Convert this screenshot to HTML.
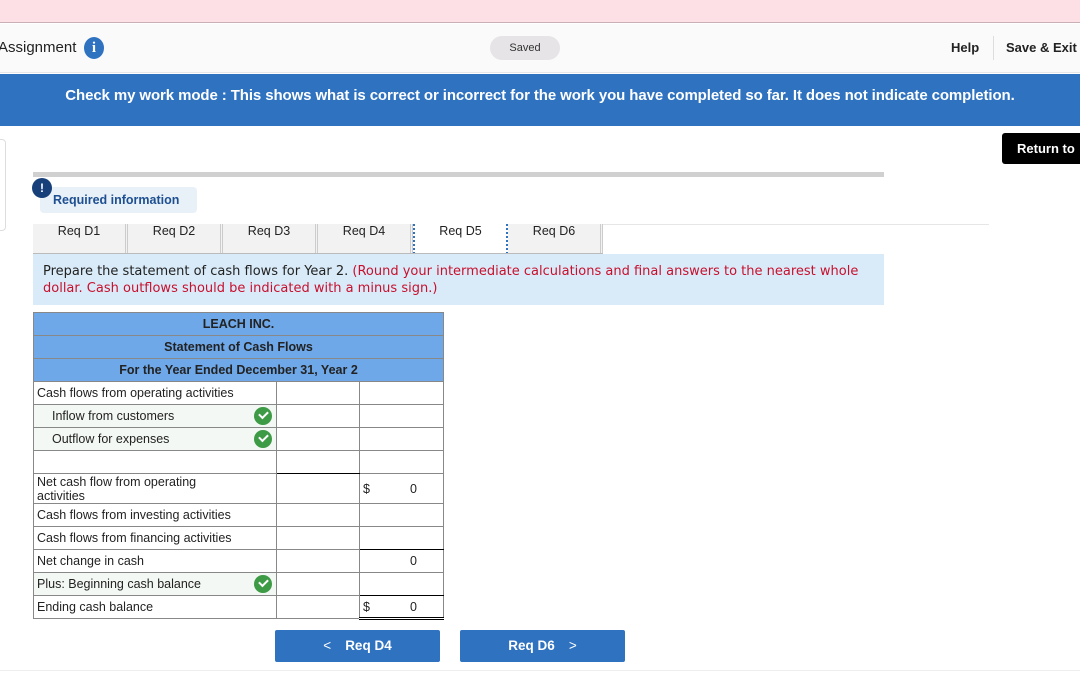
<!DOCTYPE html>
<html><head><meta charset="utf-8"><style>
*{box-sizing:border-box;margin:0;padding:0}
body{width:1080px;height:676px;overflow:hidden;background:#fff;font-family:"Liberation Sans",Arial,sans-serif;position:relative;color:#222}
.abs{position:absolute}
.pink{left:0;top:0;width:1080px;height:23px;background:#fde0e6;border-bottom:1px solid #c8b0b5}
.hdr{left:0;top:24px;width:1080px;height:49px;background:#fafafa;border-bottom:1px solid #e6e6e6}
.banner{left:0;top:74px;width:1080px;height:52px;background:#2f72c0;color:#fff;font-weight:bold;font-size:15px;text-align:center;line-height:44px;letter-spacing:-0.1px}
.tab{top:224px;height:30px;width:95px;background:#f2f2f2;border-right:3px double #ccc;font-size:12.5px;text-align:center;line-height:14px;padding-top:0}
table{border-collapse:collapse;position:absolute;left:33px;top:312px;width:411px;font-size:12.5px}
td{border:1px solid #888;height:23px;padding:0 3px;vertical-align:middle;position:relative}
.h td{background:#6fa8e8;font-weight:bold;text-align:center;border-color:#888;height:23px}
.g td.l{background:#f3f8f4}
.chk{display:block;width:18px;height:18px;border-radius:50%;background:#3d9a45;position:absolute;right:4px;top:2px}
.chk:after{content:"";position:absolute;left:5px;top:4px;width:7px;height:4px;border-left:2px solid #fff;border-bottom:2px solid #fff;transform:rotate(-45deg)}
.btn{top:630px;width:165px;height:32px;background:#2f72c0;color:#fff;font-weight:bold;font-size:13.5px;text-align:center;line-height:32px;border-radius:2px}
</style></head><body>
<div class="abs pink"></div>
<div class="abs hdr">
 <div class="abs" style="left:-2px;top:15px;font-size:15px;color:#222">Assignment</div>
 <div class="abs" style="left:84px;top:13px;width:20px;height:22px;border-radius:50%;background:#2f72c0;color:#fff;font-weight:bold;font-size:15px;text-align:center;line-height:22px;font-family:'Liberation Serif',serif">i</div>
 <div class="abs" style="left:490px;top:12px;width:70px;height:24px;border-radius:12px;background:#e6e4e6;font-size:11px;text-align:center;line-height:24px;color:#333">Saved</div>
 <div class="abs" style="left:951px;top:16px;font-size:13px;font-weight:bold">Help</div>
 <div class="abs" style="left:993px;top:12px;width:1px;height:24px;background:#ddd"></div>
 <div class="abs" style="left:1006px;top:16px;font-size:13px;font-weight:bold">Save &amp; Exit</div>
</div>
<div class="abs banner">Check my work mode : This shows what is correct or incorrect for the work you have completed so far. It does not indicate completion.</div>
<div class="abs" style="left:-10px;top:139px;width:16px;height:92px;border:1px solid #ddd;border-radius:4px"></div>
<div class="abs" style="left:1002px;top:133px;width:90px;height:31px;background:#000;color:#fff;font-weight:bold;font-size:13px;line-height:31px;padding-left:15px;border-radius:3px">Return to</div>
<div class="abs" style="left:33px;top:172px;width:851px;height:5px;background:#d0d0d0"></div>
<div class="abs" style="left:40px;top:187px;width:157px;height:26px;background:#e8f0f8;border-radius:4px;color:#1d4f91;font-weight:bold;font-size:12.5px;line-height:27px;padding-left:13px">Required information</div>
<div class="abs" style="left:32px;top:178px;width:20px;height:20px;border-radius:50%;background:#173f7a;color:#fff;font-weight:bold;font-size:12px;text-align:center;line-height:20px">!</div>
<div class="abs" style="left:33px;top:224px;width:956px;height:1px;background:#e6e6e6"></div>
<div class="abs tab" style="left:33px">Req D1</div>
<div class="abs tab" style="left:128px">Req D2</div>
<div class="abs tab" style="left:223px">Req D3</div>
<div class="abs tab" style="left:318px">Req D4</div>
<div class="abs tab" style="left:413px;background:#fff;border:1px dotted #2f72c0;border-top:none;border-right:2px dotted #2f72c0;border-left:2px dotted #2f72c0">Req D5</div>
<div class="abs tab" style="left:508px">Req D6</div>
<div class="abs" style="left:33px;top:253px;width:570px;height:1px;background:#bbb"></div>
<div class="abs" style="left:33px;top:254px;width:851px;height:51px;background:#d9ebf8;font-family:'DejaVu Sans',sans-serif;font-size:13px;line-height:16.5px;padding:10px 10px;color:#222">Prepare the statement of cash flows for Year 2. <span style="color:#c8102e">(Round your intermediate calculations and final answers to the nearest whole dollar. Cash outflows should be indicated with a minus sign.)</span></div>
<table>
<colgroup><col style="width:243px"><col style="width:83px"><col style="width:84px"></colgroup>
<tr class="h"><td colspan="3">LEACH INC.</td></tr>
<tr class="h"><td colspan="3">Statement of Cash Flows</td></tr>
<tr class="h"><td colspan="3">For the Year Ended December 31, Year 2</td></tr>
<tr><td>Cash flows from operating activities</td><td></td><td></td></tr>
<tr class="g"><td class="l" style="padding-left:18px">Inflow from customers<span class="chk"></span></td><td></td><td></td></tr>
<tr class="g"><td class="l" style="padding-left:18px">Outflow for expenses<span class="chk"></span></td><td></td><td></td></tr>
<tr><td></td><td style="border-bottom:1px solid #000"></td><td></td></tr>
<tr><td style="height:30px;line-height:14px">Net cash flow from operating<br>activities</td><td></td><td>$<span style="float:right;margin-right:23px">0</span></td></tr>
<tr><td>Cash flows from investing activities</td><td></td><td></td></tr>
<tr><td>Cash flows from financing activities</td><td></td><td style="border-bottom:1px solid #000"></td></tr>
<tr><td>Net change in cash</td><td></td><td><span style="float:right;margin-right:23px">0</span></td></tr>
<tr class="g"><td class="l">Plus: Beginning cash balance<span class="chk"></span></td><td></td><td style="border-bottom:1px solid #000"></td></tr>
<tr><td>Ending cash balance</td><td></td><td style="border-bottom:3px double #000">$<span style="float:right;margin-right:23px">0</span></td></tr>
</table>
<div class="abs btn" style="left:275px"><span style="font-weight:normal;margin-right:14px">&lt;</span>Req D4</div>
<div class="abs btn" style="left:460px">Req D6<span style="font-weight:normal;margin-left:14px">&gt;</span></div>
<div class="abs" style="left:0;top:670px;width:1080px;height:1px;background:#eee"></div>
</body></html>
